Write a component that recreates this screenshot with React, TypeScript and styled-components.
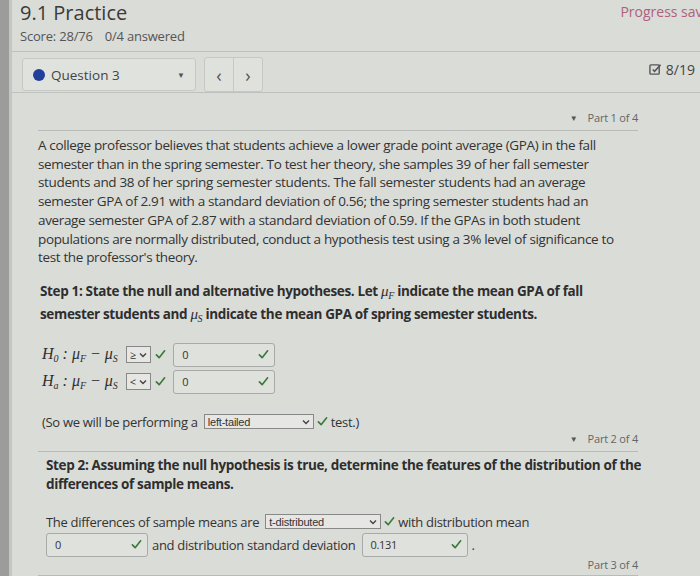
import styled, { createGlobalStyle } from 'styled-components';

const Global = createGlobalStyle`
  html, body {
    margin: 0;
    padding: 0;
    background: #dadcd8;
  }
  body {
    font-family: 'Open Sans', 'Noto Sans', sans-serif;
    color: #333;
    width: 700px;
    height: 576px;
    overflow: hidden;
  }
`;

function Check({ size = 11 }: { size?: number }) {
  return (
    <svg width={size} height={size} viewBox="0 0 12 12">
      <path d="M1.5 6.5 L4.5 9.5 L10.5 2" fill="none" stroke="#3a7a3a" strokeWidth="1.8" strokeLinecap="round" strokeLinejoin="round" />
    </svg>
  );
}

function Chevron() {
  return (
    <svg width="8" height="6" viewBox="0 0 8 6">
      <path d="M1 1.5 L4 4.5 L7 1.5" fill="none" stroke="#444" strokeWidth="1.4" />
    </svg>
  );
}

function App() {
  return (
    <>
      <Global />
      <Page>
        <LeftStrip />
        <Main>
          <Header>
            <TitleBlock>
              <Title>9.1 Practice</Title>
              <Score>
                Score: 28/76<Answered>0/4 answered</Answered>
              </Score>
            </TitleBlock>
            <Saved>Progress saved</Saved>
          </Header>
          <Toolbar>
            <QuestionSelect>
              <Dot />
              <span>Question 3</span>
              <Caret>▼</Caret>
            </QuestionSelect>
            <NavGroup>
              <NavButton>‹</NavButton>
              <NavButton>›</NavButton>
            </NavGroup>
            <Counter>
              <svg width="13" height="13" viewBox="0 0 14 14">
                <rect x="1" y="2" width="10" height="10" rx="1" fill="none" stroke="#555" strokeWidth="1.5" />
                <path d="M4 7 L6 9 L12.5 2" fill="none" stroke="#555" strokeWidth="1.6" />
              </svg>
              8/19
            </Counter>
          </Toolbar>
          <Content>
            <PartHeader $top={17}>
              <Tri>▼</Tri>Part 1 of 4
            </PartHeader>
            <Paragraph>
              A college professor believes that students achieve a lower grade point average (GPA) in the fall<br />
              semester than in the spring semester. To test her theory, she samples 39 of her fall semester<br />
              students and 38 of her spring semester students. The fall semester students had an average<br />
              semester GPA of 2.91 with a standard deviation of 0.56; the spring semester students had an<br />
              average semester GPA of 2.87 with a standard deviation of 0.59. If the GPAs in both student<br />
              populations are normally distributed, conduct a hypothesis test using a 3% level of significance to<br />
              test the professor's theory.
            </Paragraph>
            <StepText $top={15} $indent={2}>
              Step 1: State the null and alternative hypotheses. Let <Mu>μ<sub>F</sub></Mu> indicate the mean GPA of fall<br />
              semester students and <Mu>μ<sub>S</sub></Mu> indicate the mean GPA of spring semester students.
            </StepText>
            <Hypotheses>
              <HypRow>
                <MathText>
                  H<sub>0</sub> : μ<sub>F</sub> − μ<sub>S</sub>
                </MathText>
                <MiniSelect>
                  ≥ <Chevron />
                </MiniSelect>
                <Check />
                <AnswerBox $width={102}>
                  0<Check />
                </AnswerBox>
              </HypRow>
              <HypRow>
                <MathText>
                  H<sub>a</sub> : μ<sub>F</sub> − μ<sub>S</sub>
                </MathText>
                <MiniSelect>
                  &lt; <Chevron />
                </MiniSelect>
                <Check />
                <AnswerBox $width={102}>
                  0<Check />
                </AnswerBox>
              </HypRow>
            </Hypotheses>
            <Line $top={19} $indent={4}>
              (So we will be performing a
              <DropSelect $width={110}>
                left-tailed <Chevron />
              </DropSelect>
              <Check />
              test.)
            </Line>
            <PartHeader $top={0}>
              <Tri>▼</Tri>Part 2 of 4
            </PartHeader>
            <StepText $top={4} $indent={8}>
              Step 2: Assuming the null hypothesis is true, determine the features of the distribution of the<br />
              differences of sample means.
            </StepText>
            <Line $top={19} $indent={8}>
              The differences of sample means are
              <DropSelect $width={116}>
                t-distributed <Chevron />
              </DropSelect>
              <Check />
              with distribution mean
            </Line>
            <Line $top={2} $indent={8}>
              <AnswerBox $width={102} $flush>
                0<Check />
              </AnswerBox>
              and distribution standard deviation
              <AnswerBox $width={106}>
                0.131<Check />
              </AnswerBox>
              .
            </Line>
            <PartHeader $top={0} $bottom={3}>Part 3 of 4</PartHeader>
          </Content>
        </Main>
      </Page>
    </>
  );
}

export default App;

const Page = styled.div`
  display: flex;
  width: 700px;
  height: 576px;
  overflow: hidden;
`;

const LeftStrip = styled.div`
  width: 9px;
  flex-shrink: 0;
  background: #9c9d9b;
  border-right: 3px solid #c4c6c3;
`;

const Main = styled.div`
  flex: 1;
  min-width: 0;
  display: flex;
  flex-direction: column;
  & > * {
    flex-shrink: 0;
  }
`;

const Header = styled.div`
  display: flex;
  justify-content: space-between;
  align-items: flex-start;
  height: 51px;
  padding-left: 8px;
`;

const TitleBlock = styled.div`
  display: flex;
  flex-direction: column;
`;

const Title = styled.div`
  font-size: 20px;
  line-height: 26px;
  color: #3a3a3a;
`;

const Score = styled.div`
  font-size: 13px;
  color: #555;
  margin-top: 1px;
  letter-spacing: -0.2px;
`;

const Answered = styled.span`
  margin-left: 12px;
`;

const Saved = styled.div`
  font-size: 14px;
  color: #b0607c;
  margin-top: 2px;
  white-space: nowrap;
  margin-right: -19px;
`;

const Toolbar = styled.div`
  display: flex;
  align-items: flex-start;
  height: 42px;
  border-top: 1px solid #bfc1be;
  border-bottom: 1px solid #bfc1be;
  padding: 5px 0 0 10px;
  box-sizing: border-box;
  gap: 8px;
`;

const QuestionSelect = styled.div`
  display: flex;
  align-items: center;
  width: 174px;
  height: 33px;
  box-sizing: border-box;
  border: 1px solid #c6c8c5;
  border-radius: 3px;
  background: #e0e2de;
  padding: 0 10px;
  font-size: 13.5px;
  color: #444;
  gap: 6px;
  margin-top: 1px;
`;

const Dot = styled.span`
  width: 12px;
  height: 12px;
  border-radius: 50%;
  background: #233f9c;
`;

const Caret = styled.span`
  margin-left: auto;
  font-size: 8px;
  color: #555;
`;

const NavGroup = styled.div`
  display: flex;
  height: 33px;
  border: 1px solid #c6c8c5;
  border-radius: 3px;
  background: #dfe1dd;
`;

const NavButton = styled.div`
  width: 28px;
  display: flex;
  align-items: center;
  justify-content: center;
  font-size: 18px;
  color: #555;
  & + & {
    border-left: 1px solid #c6c8c5;
  }
`;

const Counter = styled.div`
  margin-left: auto;
  display: flex;
  align-items: center;
  gap: 4px;
  font-size: 14px;
  color: #444;
  margin-right: 5px;
  margin-top: 3px;
`;

const Content = styled.div`
  width: 600px;
  margin-left: 26px;
  display: flex;
  flex-direction: column;
`;

const PartHeader = styled.div<{ $top?: number; $bottom?: number }>`
  display: flex;
  justify-content: flex-end;
  align-items: center;
  height: 15px;
  font-size: 11px;
  color: #666;
  margin-top: ${(p) => p.$top ?? 0}px;
  padding-bottom: ${(p) => p.$bottom ?? 5}px;
  border-bottom: 1px solid #b9bbb8;
  letter-spacing: -0.2px;
`;

const Tri = styled.span`
  font-size: 8px;
  color: #555;
  margin-right: 10px;
`;

const Paragraph = styled.p`
  margin: 5px 0 0 0;
  font-size: 13.5px;
  line-height: 18.7px;
  color: #333;
  letter-spacing: -0.35px;
  white-space: nowrap;
`;

const StepText = styled.div<{ $top?: number; $indent?: number }>`
  margin-top: ${(p) => p.$top ?? 0}px;
  margin-left: ${(p) => p.$indent ?? 0}px;
  font-size: 13.5px;
  font-weight: 700;
  line-height: 19px;
  color: #2e2e2e;
  letter-spacing: -0.35px;
  white-space: nowrap;
`;

const Mu = styled.span`
  font-family: 'Liberation Serif', serif;
  font-style: italic;
  font-weight: 400;
  font-size: 15px;
  sub {
    font-size: 10px;
    vertical-align: -3px;
  }
`;

const Hypotheses = styled.div`
  display: flex;
  flex-direction: column;
  margin: 15px 0 0 4px;
  gap: 3px;
`;

const HypRow = styled.div`
  display: flex;
  align-items: center;
  gap: 4px;
  height: 24px;
`;

const MathText = styled.span`
  font-family: 'Liberation Serif', serif;
  font-style: italic;
  font-size: 16px;
  color: #2e2e2e;
  margin-right: 4px;
  sub {
    font-size: 10px;
    vertical-align: -3px;
  }
`;

const MiniSelect = styled.span`
  display: inline-flex;
  align-items: center;
  gap: 3px;
  height: 15px;
  padding: 0 3px;
  border: 1px solid #888;
  font-size: 11px;
  background: #e6e7e4;
`;

const AnswerBox = styled.span<{ $width: number; $flush?: boolean }>`
  display: inline-flex;
  align-items: center;
  justify-content: space-between;
  width: ${(p) => p.$width}px;
  height: 24px;
  box-sizing: border-box;
  padding: 0 5px 0 8px;
  border: 1px solid #a8aaa7;
  border-radius: 3px;
  background: #dfe1dd;
  font-size: 11px;
  color: #333;
  margin: 0 1px 0 ${(p) => (p.$flush ? 0 : 3)}px;
`;

const Line = styled.div<{ $top?: number; $indent?: number }>`
  display: flex;
  align-items: center;
  min-height: 18px;
  margin-top: ${(p) => p.$top ?? 0}px;
  margin-left: ${(p) => p.$indent ?? 0}px;
  font-size: 13px;
  color: #333;
  letter-spacing: -0.3px;
  gap: 3px;
  white-space: nowrap;
`;

const DropSelect = styled.span<{ $width: number }>`
  display: inline-flex;
  align-items: center;
  justify-content: space-between;
  width: ${(p) => p.$width}px;
  height: 15px;
  box-sizing: border-box;
  padding: 0 3px;
  border: 1px solid #888;
  background: #e6e7e4;
  font-family: 'Liberation Sans', Arial, sans-serif;
  font-size: 11px;
  letter-spacing: -0.2px;
  margin-left: 3px;
`;
